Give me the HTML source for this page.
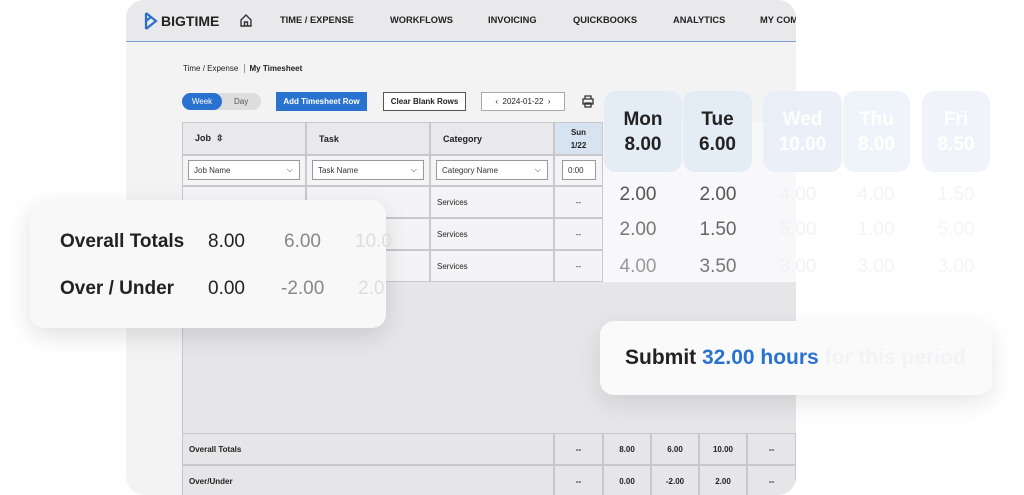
<!DOCTYPE html>
<html><head><meta charset="utf-8"><style>
*{margin:0;padding:0;box-sizing:border-box}
body{width:1024px;height:495px;background:#fff;font-family:"Liberation Sans",Arial,sans-serif;position:relative;overflow:hidden;color:#222}
.abs{position:absolute}
.card{left:126px;top:0;width:670px;height:495px;background:#f3f3f4;border-radius:18px;overflow:hidden}
.nav{left:0;top:0;width:670px;height:42px;background:#e9e9eb;border-bottom:1px solid #7aa3d8}
.nav span{position:absolute;top:15px;font-size:9.3px;font-weight:bold;color:#222;white-space:nowrap}
.t{font-size:8px;color:#222}
.cell{position:absolute;border:1px solid #c8c8cc;font-size:8px;display:flex;align-items:center}
.sel{position:absolute;height:20px;border:1px solid #999;background:#fff;font-size:8px;display:flex;align-items:center;padding-left:5px;color:#333}
.pill{position:absolute;top:91px;height:81px;border-radius:12px;background:#e4ecf6;text-align:center;font-weight:bold;font-size:19px;line-height:25px;padding-top:16px}
.num{position:absolute;font-size:19px;color:#555;width:80px;text-align:center}
</style></head><body>
<div class="abs card">
 <div class="abs nav">
  <svg class="abs" style="left:18px;top:11px" width="14" height="20" viewBox="0 0 14 20"><path d="M2 2 L12 10 L2 18 M2 2 V18 M2 10 L7 6" fill="none" stroke="#2a6fc9" stroke-width="2.2"/></svg>
  <span style="left:35px;top:13px;font-size:14px">BIGTIME</span>
  <svg class="abs" style="left:113px;top:13px" width="14" height="15" viewBox="0 0 14 15"><path d="M2 7 L7 2 L12 7 V13 H2 Z M5.5 13 V9 H8.5 V13" fill="none" stroke="#333" stroke-width="1.4"/></svg>
  <span style="left:154px">TIME / EXPENSE</span>
  <span style="left:264px">WORKFLOWS</span>
  <span style="left:362px">INVOICING</span>
  <span style="left:447px">QUICKBOOKS</span>
  <span style="left:547px">ANALYTICS</span>
  <span style="left:634px">MY COM</span>
 </div>
 <div class="abs t" style="left:57px;top:64px">Time / Expense <span style="border-left:1px solid #999;margin-left:3px;padding-left:5px;font-weight:bold">My Timesheet</span></div>
 <div class="abs" style="left:56px;top:93px;width:79px;height:17px;border-radius:9px;background:#ddd"></div>
 <div class="abs" style="left:56px;top:93px;width:40px;height:17px;border-radius:9px;background:#2a72cf;color:#fff;font-size:8px;text-align:center;line-height:17px">Week</div>
 <div class="abs t" style="left:108px;top:97px;color:#555">Day</div>
 <div class="abs" style="left:150px;top:92px;width:91px;height:19px;background:#2a72cf;color:#fff;font-size:8px;text-align:center;line-height:19px;font-weight:bold">Add Timesheet Row</div>
 <div class="abs" style="left:257px;top:92px;width:83px;height:19px;border:1px solid #555;background:#fff;font-size:8px;text-align:center;line-height:17px;font-weight:bold">Clear Blank Rows</div>
 <div class="abs" style="left:355px;top:92px;width:84px;height:19px;border:1px solid #aaa;background:#fff;font-size:8px;text-align:center;line-height:17px">&lsaquo;&nbsp; 2024-01-22 &nbsp;&rsaquo;</div>
 <svg class="abs" style="left:455px;top:94px" width="14" height="14" viewBox="0 0 14 14"><path d="M4 5V2H10V5 M2 5H12V10H2Z M4 9H10V13H4Z" fill="none" stroke="#333" stroke-width="1.3"/></svg>
 <div class="abs" style="left:56px;top:122px;width:614px;height:373px;background:#e6e6e9;border-left:1px solid #c8c8cc"></div>
 <div class="abs" style="left:56px;top:122px;width:614px;height:160px;background:#f4f4f6"></div>
 <div class="cell" style="left:56px;top:122px;width:124px;height:33px;padding-left:12px;font-size:9px;font-weight:bold;background:#e9e9ec">Job &nbsp;⇳</div>
 <div class="cell" style="left:180px;top:122px;width:124px;height:33px;padding-left:12px;font-size:9px;font-weight:bold;background:#e9e9ec">Task</div>
 <div class="cell" style="left:304px;top:122px;width:124px;height:33px;padding-left:12px;font-size:9px;font-weight:bold;background:#e9e9ec">Category</div>
 <div class="cell" style="left:428px;top:122px;width:49px;height:33px;justify-content:center;text-align:center;font-weight:bold;background:#d7e3f1;line-height:13px">Sun<br>1/22</div>
 <div class="cell" style="left:56px;top:155px;width:124px;height:31px"></div>
 <div class="cell" style="left:180px;top:155px;width:124px;height:31px"></div>
 <div class="cell" style="left:304px;top:155px;width:124px;height:31px"></div>
 <div class="cell" style="left:428px;top:155px;width:49px;height:31px"></div>
 <div class="sel" style="left:62px;top:160px;width:112px">Job Name<span style="position:absolute;right:6px">⌵</span></div>
 <div class="sel" style="left:186px;top:160px;width:112px">Task Name<span style="position:absolute;right:6px">⌵</span></div>
 <div class="sel" style="left:310px;top:160px;width:112px">Category Name<span style="position:absolute;right:6px">⌵</span></div>
 <div class="sel" style="left:436px;top:160px;width:34px">0:00</div>
 <div class="cell" style="left:56px;top:186px;width:124px;height:32px"></div><div class="cell" style="left:180px;top:186px;width:124px;height:32px"></div><div class="cell" style="left:304px;top:186px;width:124px;height:32px;padding-left:6px">Services</div><div class="cell" style="left:428px;top:186px;width:49px;height:32px;justify-content:center">--</div>
 <div class="cell" style="left:56px;top:218px;width:124px;height:32px"></div><div class="cell" style="left:180px;top:218px;width:124px;height:32px"></div><div class="cell" style="left:304px;top:218px;width:124px;height:32px;padding-left:6px">Services</div><div class="cell" style="left:428px;top:218px;width:49px;height:32px;justify-content:center">--</div>
 <div class="cell" style="left:56px;top:250px;width:124px;height:32px"></div><div class="cell" style="left:180px;top:250px;width:124px;height:32px"></div><div class="cell" style="left:304px;top:250px;width:124px;height:32px;padding-left:6px">Services</div><div class="cell" style="left:428px;top:250px;width:49px;height:32px;justify-content:center">--</div>
 <div class="cell" style="left:56px;top:433px;width:372px;height:32px;padding-left:6px;font-weight:bold">Overall Totals</div>
 <div class="cell" style="left:56px;top:465px;width:372px;height:32px;padding-left:6px;font-weight:bold">Over/Under</div>
 <div class="cell" style="left:428px;top:433px;width:49px;height:32px;justify-content:center;font-weight:bold">--</div>
 <div class="cell" style="left:477px;top:433px;width:48px;height:32px;justify-content:center;font-weight:bold">8.00</div>
 <div class="cell" style="left:525px;top:433px;width:48px;height:32px;justify-content:center;font-weight:bold">6.00</div>
 <div class="cell" style="left:573px;top:433px;width:48px;height:32px;justify-content:center;font-weight:bold">10.00</div>
 <div class="cell" style="left:621px;top:433px;width:49px;height:32px;justify-content:center;font-weight:bold">--</div>
 <div class="cell" style="left:428px;top:465px;width:49px;height:32px;justify-content:center;font-weight:bold">--</div>
 <div class="cell" style="left:477px;top:465px;width:48px;height:32px;justify-content:center;font-weight:bold">0.00</div>
 <div class="cell" style="left:525px;top:465px;width:48px;height:32px;justify-content:center;font-weight:bold">-2.00</div>
 <div class="cell" style="left:573px;top:465px;width:48px;height:32px;justify-content:center;font-weight:bold">2.00</div>
 <div class="cell" style="left:621px;top:465px;width:49px;height:32px;justify-content:center;font-weight:bold">--</div>
 <div class="abs" style="left:477px;top:122px;width:193px;height:160px;background:rgba(248,248,250,.85)"></div>
</div>
<div class="pill" style="left:604px;width:78px">Mon<br>8.00</div>
<div class="pill" style="left:683px;width:69px">Tue<br>6.00</div>
<div class="pill" style="left:763px;width:79px;background:#e9eff8;color:#fff;opacity:.9">Wed<br>10.00</div>
<div class="pill" style="left:843px;width:67px;background:#eff3fa;color:#fff">Thu<br>8.00</div>
<div class="pill" style="left:922px;width:68px;background:#f0f4fa;color:#fff">Fri<br>8.50</div>
<div class="num" style="left:598px;top:184px">2.00</div><div class="num" style="left:678px;top:184px">2.00</div><div class="num" style="left:758px;top:184px;color:#f2f2f3">4.00</div><div class="num" style="left:836px;top:184px;color:#f4f4f5">4.00</div><div class="num" style="left:916px;top:184px;color:#f5f5f6">1.50</div>
<div class="num" style="left:598px;top:219px;color:#777">2.00</div><div class="num" style="left:678px;top:219px;color:#666">1.50</div><div class="num" style="left:758px;top:219px;color:#f2f2f3">5.00</div><div class="num" style="left:836px;top:219px;color:#f4f4f5">1.00</div><div class="num" style="left:916px;top:219px;color:#f5f5f6">5.00</div>
<div class="num" style="left:598px;top:256px;color:#999">4.00</div><div class="num" style="left:678px;top:256px;color:#777">3.50</div><div class="num" style="left:758px;top:256px;color:#f2f2f3">3.00</div><div class="num" style="left:836px;top:256px;color:#f4f4f5">3.00</div><div class="num" style="left:916px;top:256px;color:#f5f5f6">3.00</div>
<div class="abs" style="left:30px;top:200px;width:356px;height:128px;border-radius:14px;background:rgba(248,248,249,.97);box-shadow:0 8px 24px rgba(0,0,0,.12)">
 <div class="abs" style="left:30px;top:31px;font-size:19px;font-weight:bold">Overall Totals</div>
 <div class="abs" style="left:30px;top:78px;font-size:19px;font-weight:bold">Over / Under</div>
 <div class="abs" style="left:178px;top:31px;font-size:19px">8.00</div>
 <div class="abs" style="left:178px;top:78px;font-size:19px">0.00</div>
 <div class="abs" style="left:254px;top:31px;font-size:19px;color:#888">6.00</div>
 <div class="abs" style="left:251px;top:78px;font-size:19px;color:#888">-2.00</div>
 <div class="abs" style="left:325px;top:31px;font-size:19px;color:#ddd">10.0</div>
 <div class="abs" style="left:328px;top:78px;font-size:19px;color:#ddd">2.0</div>
</div>
<div class="abs" style="left:600px;top:321px;width:392px;height:74px;border-radius:14px;background:rgba(250,250,251,.97);box-shadow:0 8px 24px rgba(0,0,0,.1)">
 <div class="abs" style="left:25px;top:25px;font-size:21px;font-weight:bold;white-space:nowrap">Submit <span style="color:#2a72cf">32.00 hours</span> <span style="color:#f3f3f5">for this period</span></div>
</div>
</body></html>
